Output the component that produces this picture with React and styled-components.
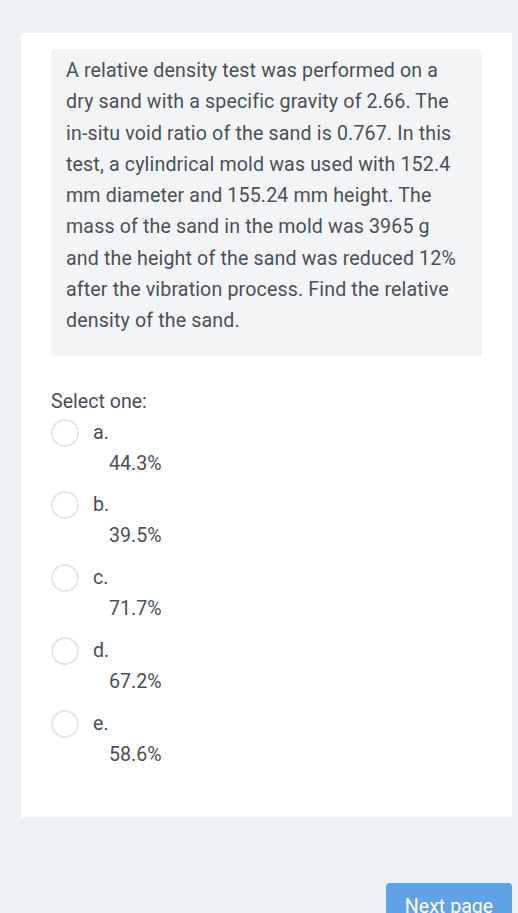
import React from 'react';
import styled, { createGlobalStyle } from 'styled-components';

const GlobalStyle = createGlobalStyle`
    html, body {
        margin: 0;
        padding: 0;
        background: #eef1f3;
        font-family: Roboto, "Liberation Sans", sans-serif;
        color: #4a5055;
    }
`;

const Page = styled.div`
    padding: 33px 6px 0 21px;
    display: flex;
    flex-direction: column;
`;

const Card = styled.div`
    background: #ffffff;
    height: 784px;
    box-sizing: border-box;
    padding: 16px 30px 0 30px;
`;

const Question = styled.div`
    background: #f2f4f6;
    border-radius: 3px;
    padding: 6px 15px 19px 15px;
    font-size: 19.6px;
    letter-spacing: 0.15px;
    line-height: 31.3px;
`;

const Line = styled.span`
    display: block;
    white-space: nowrap;
`;

const Prompt = styled.div`
    margin-top: 32px;
    font-size: 19.6px;
    line-height: 28px;
`;

const Options = styled.div`
    display: flex;
    flex-direction: column;
    margin-top: 3px;
`;

const Option = styled.label`
    display: grid;
    grid-template-columns: 28px 1fr;
    grid-template-rows: 28px 28px;
    align-content: start;
    column-gap: 14px;
    row-gap: 3px;
    height: 72.8px;
    font-size: 19.6px;
`;

const Radio = styled.span`
    width: 28px;
    height: 28px;
    box-sizing: border-box;
    border-radius: 50%;
    border: 2px solid #e4e6e8;
    background: #fff;
`;

const Letter = styled.div`
    line-height: 28px;
`;

const Value = styled.div`
    grid-column: 2;
    padding-left: 16px;
    line-height: 28px;
`;

const Footer = styled.div`
    display: flex;
    justify-content: flex-end;
    padding-top: 66px;
`;

const NextButton = styled.button`
    width: 126px;
    height: 44px;
    border: none;
    border-radius: 4px 4px 0 0;
    background: #5fa2e8;
    color: #ffffff;
    font-family: Roboto, "Liberation Sans", sans-serif;
    font-size: 19.6px;
    padding: 12px 0 0 0;
    display: flex;
    justify-content: center;
    align-items: flex-start;
`;

const questionLines = [
    'A relative density test was performed on a',
    'dry sand with a specific gravity of 2.66. The',
    'in-situ void ratio of the sand is 0.767. In this',
    'test, a cylindrical mold was used with 152.4',
    'mm diameter and 155.24 mm height. The',
    'mass of the sand in the mold was 3965 g',
    'and the height of the sand was reduced 12%',
    'after the vibration process. Find the relative',
    'density of the sand.',
];

const options = [
    { letter: 'a.', value: '44.3%' },
    { letter: 'b.', value: '39.5%' },
    { letter: 'c.', value: '71.7%' },
    { letter: 'd.', value: '67.2%' },
    { letter: 'e.', value: '58.6%' },
];

export default function App() {
    return (
        <>
            <GlobalStyle />
            <Page>
                <Card>
                    <Question>
                        {questionLines.map((line) => (
                            <Line key={line}>{line}</Line>
                        ))}
                    </Question>
                    <Prompt>Select one:</Prompt>
                    <Options>
                        {options.map((o) => (
                            <Option key={o.letter}>
                                <Radio />
                                <Letter>{o.letter}</Letter>
                                <Value>{o.value}</Value>
                            </Option>
                        ))}
                    </Options>
                </Card>
                <Footer>
                    <NextButton>Next page</NextButton>
                </Footer>
            </Page>
        </>
    );
}
